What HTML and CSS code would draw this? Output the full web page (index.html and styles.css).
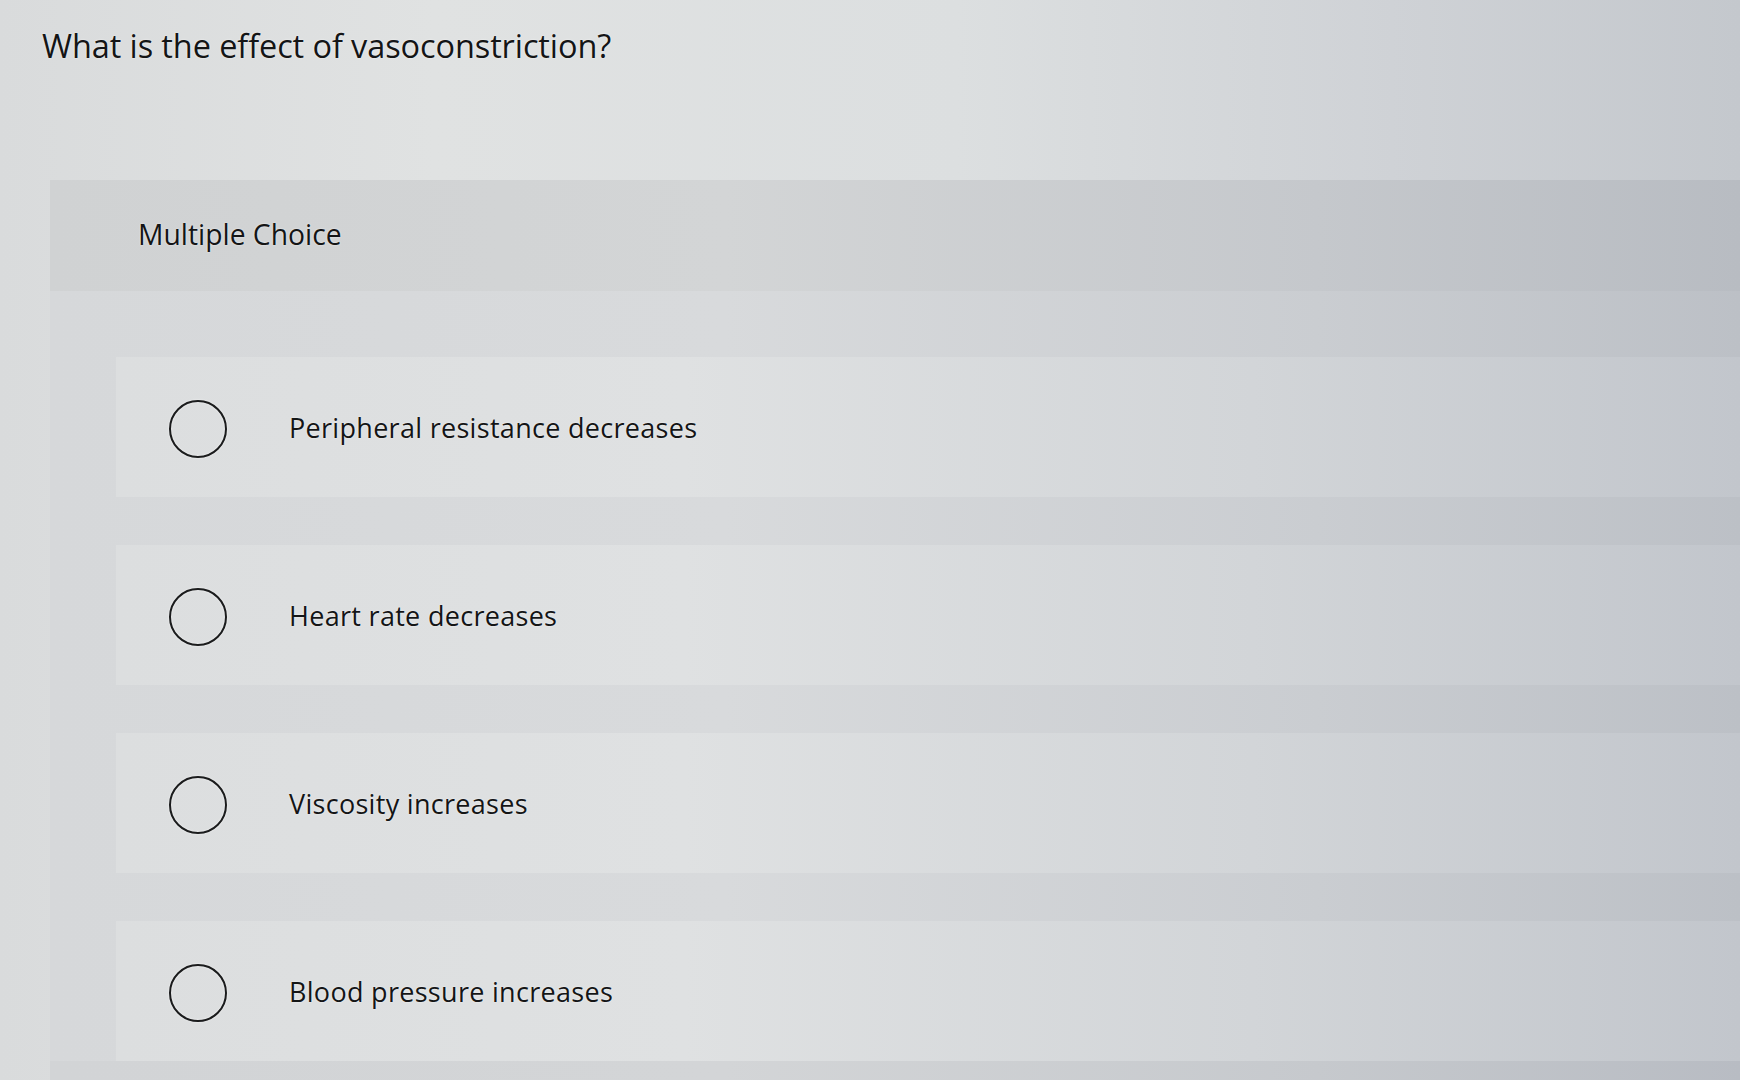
FILE: index.html
```html
<!DOCTYPE html>
<html lang="en">
<head>
<meta charset="utf-8">
<title>Question</title>
<link rel="stylesheet" href="styles.css">
</head>
<body>
  <main class="page">
    <h1 class="question">What is the effect of vasoconstriction?</h1>

    <section class="panel">
      <header class="panel-head">
        <span class="panel-title">Multiple Choice</span>
      </header>

      <div class="options">
        <label class="option">
          <span class="radio"></span>
          <span class="option-text">Peripheral resistance decreases</span>
        </label>
        <label class="option">
          <span class="radio"></span>
          <span class="option-text">Heart rate decreases</span>
        </label>
        <label class="option">
          <span class="radio"></span>
          <span class="option-text">Viscosity increases</span>
        </label>
        <label class="option">
          <span class="radio"></span>
          <span class="option-text">Blood pressure increases</span>
        </label>
      </div>
    </section>
  </main>
</body>
</html>
```
FILE: styles.css
```css
* {
  box-sizing: border-box;
}

html,
body {
  margin: 0;
  height: 100%;
}

body {
  font-family: "Open Sans", Lato, "Liberation Sans", Arial, sans-serif;
  color: #141516;
  background: linear-gradient(90deg, #d9dbdc 0%, #e0e2e2 25%, #dcdfe0 55%, #cfd2d6 80%, #c4c8cd 100%);
  overflow: hidden;
}

.page {
  display: flex;
  flex-direction: column;
  height: 100%;
}

.question {
  margin: 0;
  padding: 23px 0 0 42px;
  height: 180px;
  font-size: 32.5px;
  font-weight: 400;
  letter-spacing: -0.1px;
  text-shadow: 0 0 2px rgba(255, 255, 255, 0.8);
}

.panel {
  flex: 1;
  margin-left: 50px;
  display: flex;
  flex-direction: column;
  background: linear-gradient(90deg, #d2d4d6 0%, #d3d5d7 40%, #c6c9cd 75%, #b8bcc3 100%);
}

.panel-head {
  height: 111px;
  display: flex;
  align-items: center;
  padding-left: 88px;
  padding-bottom: 4px;
  background: linear-gradient(90deg, #d0d2d3 0%, #d3d5d6 40%, #c5c8cc 75%, #b8bcc2 100%);
}

.panel-title {
  font-size: 28.3px;
  text-shadow: 0 0 2px rgba(255, 255, 255, 0.8);
}

.options {
  display: flex;
  flex-direction: column;
  gap: 48px;
  padding: 66px 0 0 66px;
  background: linear-gradient(90deg, #d6d8da 0%, #d8dadc 40%, #cacdd1 75%, #bcc0c6 100%);
}

.option {
  height: 140px;
  display: flex;
  align-items: center;
  padding: 4px 0 0 53px;
  background: linear-gradient(90deg, #dcdedf 0%, #dfe1e2 35%, #d2d5d8 70%, #c2c6cc 100%);
  cursor: pointer;
}

.radio {
  flex: none;
  width: 58px;
  height: 58px;
  border: 2px solid #1b1c1d;
  border-radius: 50%;
  box-shadow: 0 0 2px rgba(255, 255, 255, 0.9), inset 0 0 2px rgba(255, 255, 255, 0.9);
}

.option-text {
  margin-left: 62px;
  margin-top: -4px;
  font-size: 27px;
  letter-spacing: 0.3px;
  text-shadow: 0 0 2px rgba(255, 255, 255, 0.8);
}
```
